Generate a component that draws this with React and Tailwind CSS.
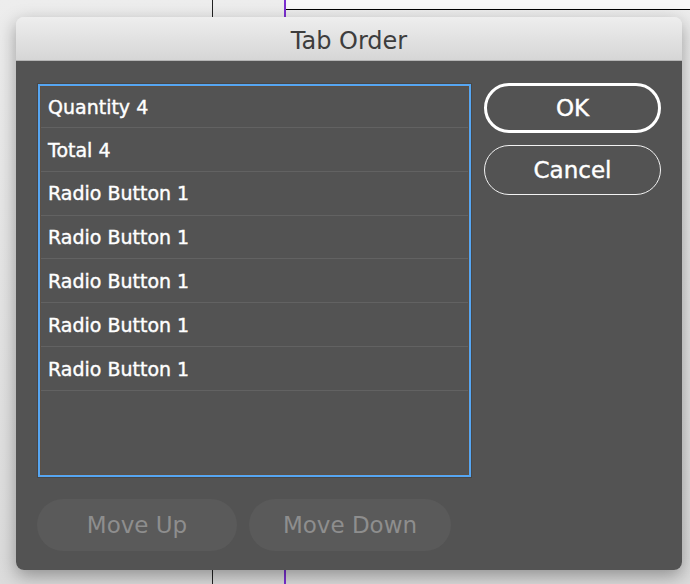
import React from "react";

const items = [
  "Quantity 4",
  "Total 4",
  "Radio Button 1",
  "Radio Button 1",
  "Radio Button 1",
  "Radio Button 1",
  "Radio Button 1",
];

const font = "font-['DejaVu_Sans','Liberation_Sans',sans-serif]";

const App = () => {
  return (
    <div
      className={`relative h-[584px] w-[690px] overflow-hidden bg-gradient-to-b from-[#ededed] to-[#dcdcdc] ${font}`}
    >
      {/* desktop behind the dialog */}
      <div className="absolute left-[285px] right-0 top-0 h-[10px] border-b border-black bg-[#f7f7f7]" />
      <div className="absolute left-[212px] top-0 h-full w-px bg-[#222]" />
      <div className="absolute left-[284px] top-0 h-full w-[2px] bg-[#7b2fd0]" />

      {/* dialog */}
      <div className="relative ml-[16px] mt-[17px] flex h-[553px] w-[666px] flex-col overflow-hidden rounded-[8px] shadow-[0_6px_18px_rgba(0,0,0,0.35)]">
        <div className="flex h-[44px] shrink-0 items-center justify-center border-b border-[#b5b5b5] bg-gradient-to-b from-[#eeeeee] to-[#d6d6d6] pt-[5px] text-[24px] text-[#3d3d3d]">
          Tab Order
        </div>

        <div className="flex flex-1 flex-col bg-[#535353] pl-[22px] pr-[21px] pt-[23px]">
          <div className="flex gap-[13px]">
            <div className="h-[393px] w-[433px] shrink-0 border-2 border-[#56a6f2] shadow-[0_0_0_1px_#474747]">
              <div className="h-full border border-[#5d5044]">
                {items.map((item, i) => (
                  <div
                    key={i}
                    className={`flex ${i === 0 ? "h-[41px]" : "h-[43.8px]"} items-center border-b border-[#626262] pl-[7px] pt-px text-[19px] text-white [-webkit-text-stroke:0.4px_white]`}
                  >
                    {item}
                  </div>
                ))}
              </div>
            </div>

            <div className="flex flex-1 flex-col gap-[12px]">
              <button className="-mt-px flex h-[50px] items-center justify-center rounded-full border-[3px] border-white text-[23px] text-white [-webkit-text-stroke:0.4px_white]">
                OK
              </button>
              <button className="flex h-[50px] items-center justify-center rounded-full border-[1.5px] border-[#f2f2f2] text-[23px] text-white [-webkit-text-stroke:0.4px_white]">
                Cancel
              </button>
            </div>
          </div>

          <div className="mt-[22px] flex gap-[12px]">
            <button className="-ml-px flex h-[52px] w-[200px] items-center justify-center rounded-full bg-[#5a5a5a] pt-px text-[23px] text-[#8e8e8e]">
              Move Up
            </button>
            <button className="flex h-[52px] w-[202px] items-center justify-center rounded-full bg-[#5a5a5a] pt-px text-[23px] text-[#8e8e8e]">
              Move Down
            </button>
          </div>
        </div>
      </div>
    </div>
  );
};

export default App;
